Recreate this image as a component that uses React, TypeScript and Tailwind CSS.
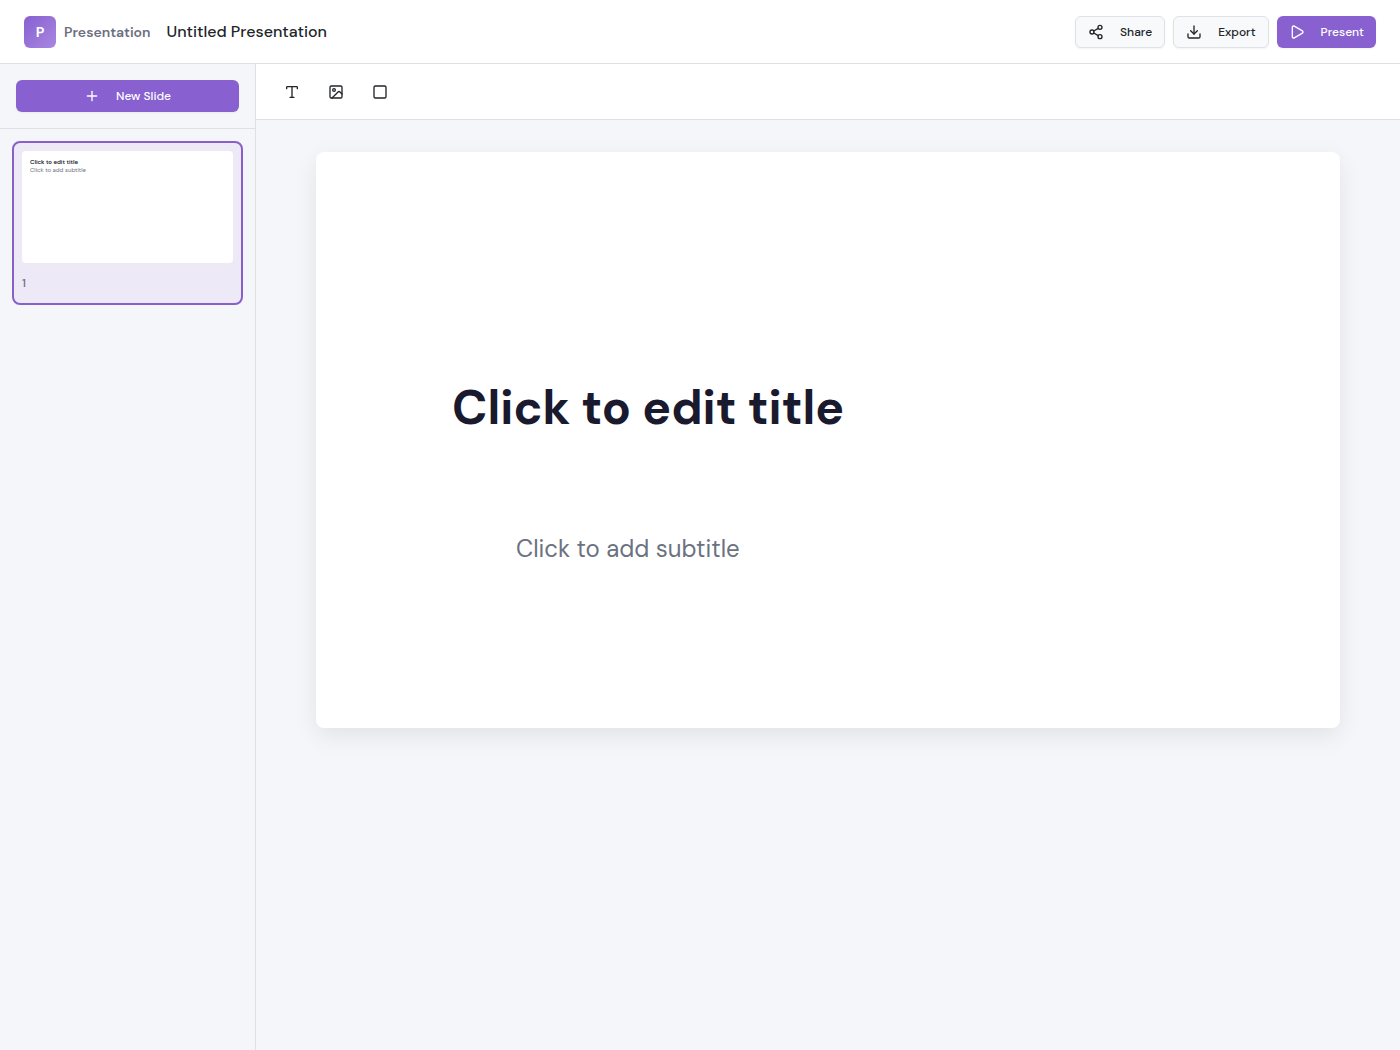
import React from "react";
import { Download, Image, Play, Plus, Share2, Square, Type } from "lucide-react";

const tools = [
    { label: "Add text", Icon: Type },
    { label: "Add image", Icon: Image },
    { label: "Add shape", Icon: Square },
];

const Header: React.FC = () => {
    return (
        <header className="h-16 shrink-0 flex items-center justify-between gap-4 px-6 bg-white border-b border-[#dee0e3]">
            {/* Left side */}
            <div className="flex items-center gap-4">
                <a href="#" className="flex items-center gap-2">
                    <span className="size-8 rounded-md bg-linear-135 from-[#8860d0] to-[#a987e0] text-white text-sm font-bold flex items-center justify-center">P</span>
                    <span className="text-sm font-semibold text-[#6b7080]">Presentation</span>
                </a>
                <input
                    aria-label="Presentation title"
                    defaultValue="Untitled Presentation"
                    className="w-60 text-base font-medium text-[#212529] bg-transparent outline-none"
                />
            </div>

            {/* Right side */}
            <div className="flex items-center gap-2 text-xs font-medium">
                <button className="h-8 px-3 flex items-center gap-4 rounded-md border border-[#dee2e6] bg-[#f8f9fa] text-[#212529] shadow-xs">
                    <Share2 size={16} />
                    Share
                </button>
                <button className="h-8 px-3 flex items-center gap-4 rounded-md border border-[#dee2e6] bg-[#f8f9fa] text-[#212529] shadow-xs">
                    <Download size={16} />
                    Export
                </button>
                <button className="h-8 px-3 flex items-center gap-4 rounded-md bg-[#8860d0] text-white shadow-xs">
                    <Play size={16} />
                    Present
                </button>
            </div>
        </header>
    )
}

const Sidebar: React.FC = () => {
    return (
        <aside className="w-64 shrink-0 bg-[#f4f6fa] border-r border-[#dee0e3]">
            <div className="p-4 border-b border-[#dee0e3]">
                <button className="w-full h-8 flex items-center justify-center gap-4 rounded-md bg-[#8860d0] text-white text-xs font-medium shadow-xs">
                    <Plus size={16} />
                    New Slide
                </button>
            </div>
            <div className="p-3">
                <button className="w-full p-2 block text-left rounded-lg border-2 border-[#8860c8] bg-[#ede9f6]">
                    <span className="aspect-[211/112] px-2 py-[7px] block rounded-sm bg-white text-[6px] leading-[8px]">
                        <span className="block font-semibold text-[#1a1a2e]">Click to edit title</span>
                        <span className="block text-[#6b7280]">Click to add subtitle</span>
                    </span>
                    <span className="mt-2 py-1 block text-xs font-medium text-[#6b7280]">1</span>
                </button>
            </div>
        </aside>
    )
}

const Toolbar: React.FC = () => {
    return (
        <div className="h-14 shrink-0 flex items-center gap-2 px-[18px] bg-white border-b border-[#dee0e3]">
            {tools.map(({ label, Icon }) => (
                <button key={label} aria-label={label} className="size-9 flex items-center justify-center rounded-md text-[#212529]">
                    <Icon size={16} />
                </button>
            ))}
        </div>
    )
}

const Slide: React.FC = () => {
    return (
        <div className="w-full max-w-5xl aspect-video rounded-lg bg-white shadow-[0_8px_24px_rgba(0,0,0,0.08)] flex flex-col justify-center pl-[136px] pt-16">
            <h1 className="text-5xl leading-[58px] font-bold text-[#1a1a2e]">Click to edit title</h1>
            <p className="mt-24 pl-16 text-2xl text-[#6b7280]">Click to add subtitle</p>
        </div>
    )
}

const App: React.FC = () => {
    return (
        <div className="min-h-screen flex flex-col bg-[#f4f6fa] font-['DM_Sans',Inter,sans-serif]">
            <Header />
            <div className="flex-1 flex">
                <Sidebar />
                <main className="flex-1 min-w-0 flex flex-col">
                    <Toolbar />
                    <div className="flex-1 flex justify-center items-start p-8">
                        <Slide />
                    </div>
                </main>
            </div>
        </div>
    )
}

export default App
